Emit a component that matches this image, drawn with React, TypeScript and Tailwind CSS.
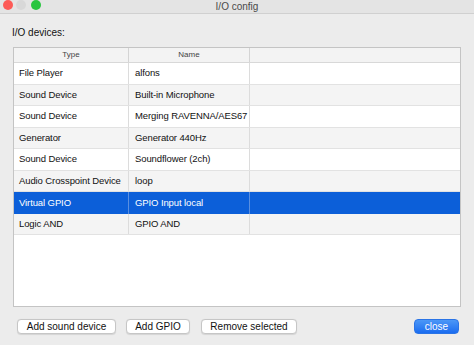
import React from "react";

const rows: [string, string][] = [
  ["File Player", "alfons"],
  ["Sound Device", "Built-in Microphone"],
  ["Sound Device", "Merging RAVENNA/AES67"],
  ["Generator", "Generator 440Hz"],
  ["Sound Device", "Soundflower (2ch)"],
  ["Audio Crosspoint Device", "loop"],
  ["Virtual GPIO", "GPIO Input local"],
  ["Logic AND", "GPIO AND"],
];

export default function App() {
  return (
    <div
      className="w-[474px] h-[345px] bg-[#ececec] flex flex-col overflow-hidden text-[#111]"
      style={{ fontFamily: '"Liberation Sans", Arial, sans-serif' }}
    >
      {/* title bar */}
      <div className="relative h-[14px] bg-[#e4e4e4] border-b border-[#d0d0d0] flex items-center justify-center shrink-0">
        <div className="absolute left-[3px] top-[0px] w-[10px] h-[10px] rounded-full bg-[#fd5b57]" />
        <div className="absolute left-[16px] top-[0px] w-[10px] h-[10px] rounded-full bg-[#d8d8d8]" />
        <div className="absolute left-[31px] top-[0px] w-[10px] h-[10px] rounded-full bg-[#28c53f]" />
        <span className="text-[10px] text-[#4a4a4a] leading-none">I/O config</span>
      </div>

      {/* label */}
      <div className="pl-[12px] pt-[14px] h-[33px] text-[10px] leading-none shrink-0">I/O devices:</div>

      {/* table */}
      <div className="mx-[13px] h-[260px] border border-[#c4c4c4] bg-white flex flex-col shrink-0 whitespace-nowrap">
        <div className="h-[15px] bg-[#f3f3f3] border-b border-[#d8d8d8] flex text-[8px] text-[#444] shrink-0">
          <div className="w-[115px] border-r border-[#d4d4d4] flex items-center justify-center">Type</div>
          <div className="w-[121px] border-r border-[#d4d4d4] flex items-center justify-center">Name</div>
          <div className="flex-1" />
        </div>
        {rows.map(([t, n], i) => {
          const sel = i === 6;
          const bg = sel ? "bg-[#0c5fd9] text-white" : i % 2 === 1 ? "bg-[#f4f4f4]" : "bg-white";
          return (
            <div
              key={i}
              className={`h-[21.5px] flex text-[9.5px] tracking-[-0.1px] ${bg} ${sel ? "" : "border-b border-[#e2e2e2]"}`}
            >
              <div className={`w-[115px] pl-[5px] flex items-center overflow-hidden border-r ${sel ? "border-[#5a8fe0]" : "border-[#dcdcdc]"}`}>{t}</div>
              <div className={`w-[121px] pl-[6px] flex items-center overflow-hidden border-r ${sel ? "border-[#5a8fe0]" : "border-[#dcdcdc]"}`}>{n}</div>
              <div className="flex-1" />
            </div>
          );
        })}
        <div className="flex-1 bg-white" />
      </div>

      {/* buttons */}
      <div className="flex items-center pl-[17px] pr-[15px] pt-[12px] text-[10px] whitespace-nowrap">
        <button className="h-[15px] w-[99px] bg-white border border-[#c6c6c6] rounded-[4px] shadow-[0_0.5px_1px_rgba(0,0,0,0.1)] leading-none">Add sound device</button>
        <button className="ml-[10px] h-[15px] w-[64px] bg-white border border-[#c6c6c6] rounded-[4px] shadow-[0_0.5px_1px_rgba(0,0,0,0.1)] leading-none">Add GPIO</button>
        <button className="ml-[11px] h-[15px] w-[96px] bg-white border border-[#c6c6c6] rounded-[4px] shadow-[0_0.5px_1px_rgba(0,0,0,0.1)] leading-none">Remove selected</button>
        <div className="flex-1" />
        <button className="h-[15px] w-[45px] rounded-[4px] bg-gradient-to-b from-[#4b97f7] to-[#1a6cf0] border border-[#2a74e6] text-white leading-none">close</button>
      </div>
    </div>
  );
}
